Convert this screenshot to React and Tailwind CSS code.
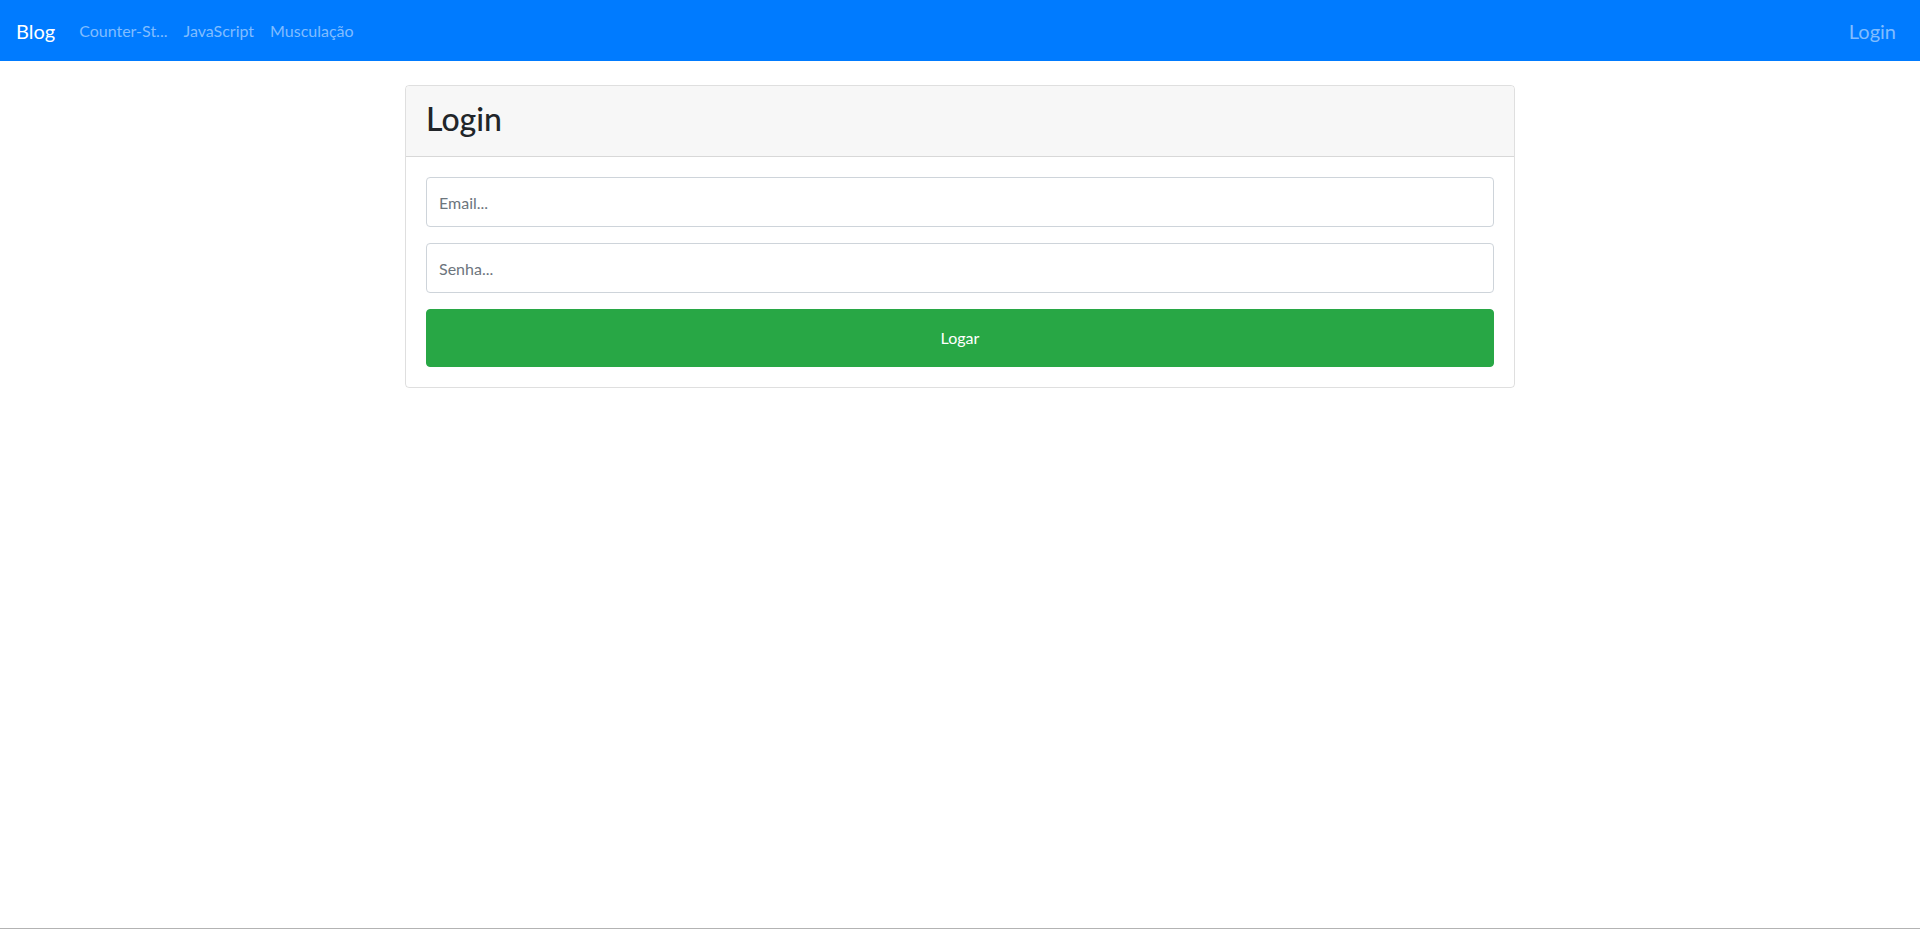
export default function App() {
  return (
    <div
      className="h-[929px] bg-white border-b border-[#b3b3b3] text-[#212529]"
      style={{ fontFamily: 'Lato, "Noto Sans", sans-serif' }}
    >
      <nav className="h-[61px] bg-[#007bff] px-4 flex items-center justify-between">
        <div className="flex items-center">
          <a href="#" className="text-white text-[20px] leading-[30px] mr-4">Blog</a>
          <ul className="flex items-center text-[16px] leading-6 text-[#80bdff]">
            <li><a href="#" className="px-2">Counter-St...</a></li>
            <li><a href="#" className="px-2">JavaScript</a></li>
            <li><a href="#" className="px-2">Musculação</a></li>
          </ul>
        </div>
        <a href="#" className="px-2 text-[20px] leading-[30px] text-[#80bdff]">Login</a>
      </nav>

      <div className="w-[1110px] mx-auto mt-6 border border-[rgba(0,0,0,0.125)] rounded-[4px]">
        <div className="bg-[#f7f7f7] px-5 pt-[14px] pb-[10px] border-b border-[rgba(0,0,0,0.125)] rounded-t-[4px]">
          <h2 className="text-[32px] leading-[1.2] font-medium mb-2">Login</h2>
        </div>
        <div className="p-5 flex flex-col gap-4">
          <input
            type="email"
            placeholder="Email..."
            className="h-[50px] w-full px-3 text-[16px] border border-[#ced4da] rounded-[4px] placeholder:text-[#6c757d] outline-none"
          />
          <input
            type="password"
            placeholder="Senha..."
            className="h-[50px] w-full px-3 text-[16px] border border-[#ced4da] rounded-[4px] placeholder:text-[#6c757d] outline-none"
          />
          <button className="h-[58px] w-full bg-[#28a745] border border-[#28a745] text-white text-[16px] rounded-[4px]">
            Logar
          </button>
        </div>
      </div>
    </div>
  );
}
